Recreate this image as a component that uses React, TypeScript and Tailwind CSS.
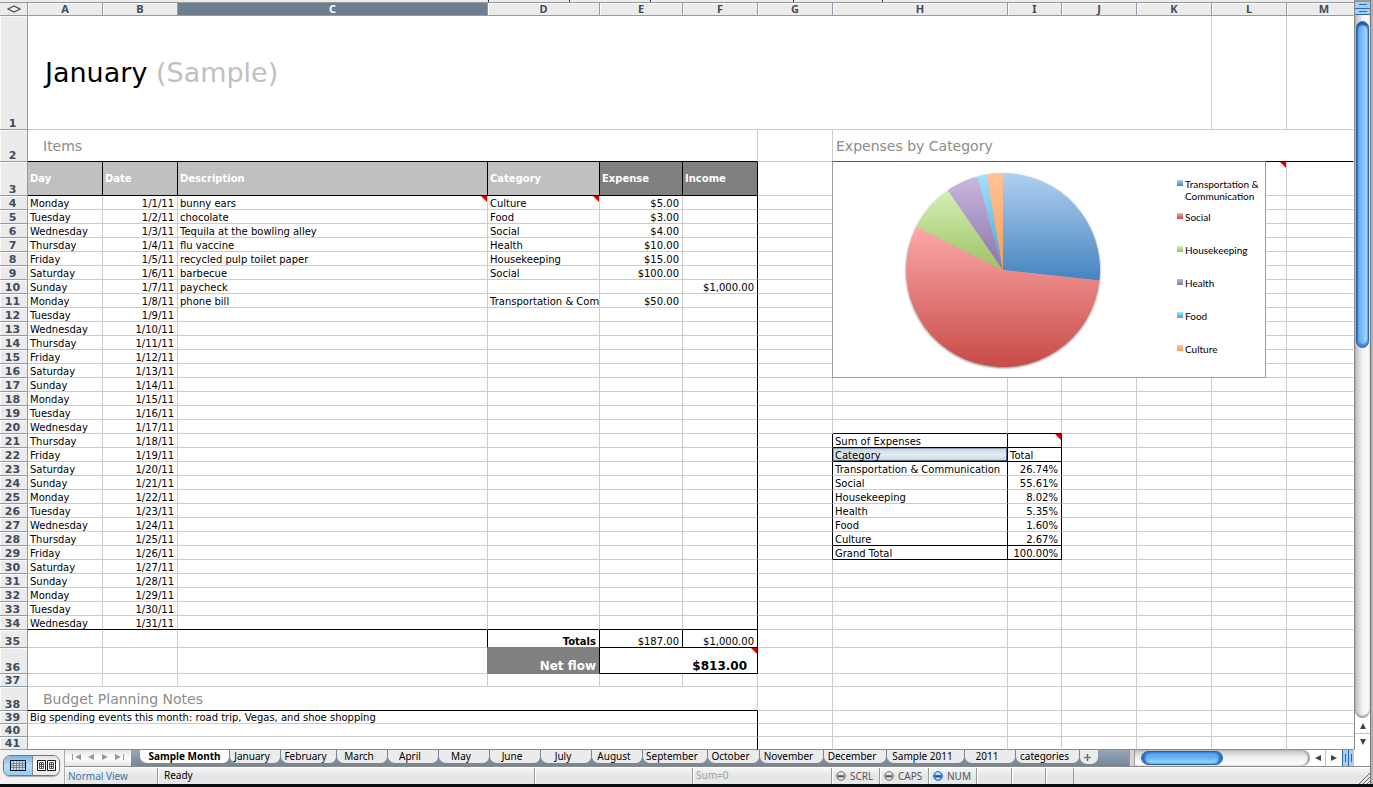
import { useState } from 'react';
import type { ReactNode } from 'react';
import clsx from 'clsx';

const COLUMNS = [
  { name: 'A', width: 'w-[75px]' },
  { name: 'B', width: 'w-[75px]' },
  { name: 'C', width: 'w-[310px]' },
  { name: 'D', width: 'w-[112px]' },
  { name: 'E', width: 'w-[83px]' },
  { name: 'F', width: 'w-[75px]' },
  { name: 'G', width: 'w-[75px]' },
  { name: 'H', width: 'w-[175px]' },
  { name: 'I', width: 'w-[54px]' },
  { name: 'J', width: 'w-[75px]' },
  { name: 'K', width: 'w-[75px]' },
  { name: 'L', width: 'w-[75px]' },
  { name: 'M', width: 'w-auto' },
];

const WEEKDAYS = ['Sunday', 'Monday', 'Tuesday', 'Wednesday', 'Thursday', 'Friday', 'Saturday'];

// the sample month starts on a Monday
const DAYS = Array.from({ length: 31 }, (_, i) => WEEKDAYS[(i + 1) % 7]);
const FIRST_ROW = 4;

interface Item {
  description: string;
  category?: string;
  expense?: string;
  income?: string;
}

const ITEMS: Item[] = [
  { description: 'bunny ears', category: 'Culture', expense: '$5.00' },
  { description: 'chocolate', category: 'Food', expense: '$3.00' },
  { description: 'Tequila at the bowling alley', category: 'Social', expense: '$4.00' },
  { description: 'flu vaccine', category: 'Health', expense: '$10.00' },
  { description: 'recycled pulp toilet paper', category: 'Housekeeping', expense: '$15.00' },
  { description: 'barbecue', category: 'Social', expense: '$100.00' },
  { description: 'paycheck', income: '$1,000.00' },
  { description: 'phone bill', category: 'Transportation & Com', expense: '$50.00' },
];

const PIVOT: Record<number, [string, string]> = {
  21: ['Sum of Expenses', ''],
  22: ['Category', 'Total'],
  23: ['Transportation & Communication', '26.74%'],
  24: ['Social', '55.61%'],
  25: ['Housekeeping', '8.02%'],
  26: ['Health', '5.35%'],
  27: ['Food', '1.60%'],
  28: ['Culture', '2.67%'],
  29: ['Grand Total', '100.00%'],
};

const SLICES = [
  { id: 'transport', label: 'Transportation & Communication', share: 26.74, from: '#b0d0ef', to: '#4484c0' },
  { id: 'social', label: 'Social', share: 55.61, from: '#fba9a9', to: '#c74b47' },
  { id: 'house', label: 'Housekeeping', share: 8.02, from: '#d6efb4', to: '#9dc265' },
  { id: 'health', label: 'Health', share: 5.35, from: '#c8b8de', to: '#8a72a9' },
  { id: 'food', label: 'Food', share: 1.6, from: '#a3e2fd', to: '#4a9ed6' },
  { id: 'culture', label: 'Culture', share: 2.67, from: '#ffc397', to: '#f89c55' },
];

const TABS = [
  { name: 'Sample Month', width: 'w-[90px]' },
  { name: 'January', width: 'w-[51px]' },
  { name: 'February', width: 'w-[56px]' },
  { name: 'March', width: 'w-[51px]' },
  { name: 'April', width: 'w-[51px]' },
  { name: 'May', width: 'w-[51px]' },
  { name: 'June', width: 'w-[51px]' },
  { name: 'July', width: 'w-[51px]' },
  { name: 'August', width: 'w-[51px]' },
  { name: 'September', width: 'w-[65px]' },
  { name: 'October', width: 'w-[52px]' },
  { name: 'November', width: 'w-[64px]' },
  { name: 'December', width: 'w-[63px]' },
  { name: 'Sample 2011', width: 'w-[78px]' },
  { name: '2011', width: 'w-[51px]' },
  { name: 'categories', width: 'w-[64px]' },
];

interface CellProps {
  children?: ReactNode;
  className?: string;
  span?: number;
  right?: string;
  bottom?: string;
  note?: boolean;
}

function Cell({ children, className, span, right = 'border-r-[#ccc]', bottom = 'border-b-[#ccc]', note }: CellProps) {
  return (
    <td
      colSpan={span}
      className={clsx('relative border-r border-b pr-[3px] pl-[2px] whitespace-nowrap', right, bottom, className ?? 'align-bottom')}
    >
      {children}
      {note && <span className="absolute top-0 right-0 size-[6px] bg-[#e00000] [clip-path:polygon(0_0,100%_0,100%_100%)]" />}
    </td>
  );
}

function Row({ index, height, children }: { index: number; height: string; children: ReactNode }) {
  return (
    <tr className={height}>
      <th
        scope="row"
        className="border-r border-b border-[#8e9dab] bg-[#ebebeb] pr-[2px] align-bottom text-[11px] font-bold text-[#414b5c] shadow-[inset_1px_1px_0_#fafafa]"
      >
        {index}
      </th>
      {children}
    </tr>
  );
}

function Blanks({ count }: { count: number }) {
  return Array.from({ length: count }, (_, i) => <Cell key={i} />);
}

const BLACK_R = 'border-r-black';
const BLACK_B = 'border-b-black';

function slicePath(start: number, end: number) {
  const point = (share: number) => {
    const angle = (share / 100) * Math.PI * 2;
    return `${171 + 97 * Math.sin(angle)} ${109 - 97 * Math.cos(angle)}`;
  };
  return `M171 109 L${point(start)} A97 97 0 ${end - start > 50 ? 1 : 0} 1 ${point(end)} Z`;
}

function ExpenseChart() {
  let total = 0;
  const slices = SLICES.map((slice) => {
    const start = total;
    total += slice.share;
    return { ...slice, path: slicePath(start, total) };
  });

  return (
    <figure className="absolute -top-px -left-px flex h-[217px] w-[434px] border border-[#9c9c9c] border-t-[#555] bg-white">
      <svg viewBox="1 1 344 215" className="h-[215px] w-[344px] shrink-0" role="img" aria-label="Expenses by Category">
        <defs>
          {slices.map((s) => (
            <linearGradient key={s.id} id={s.id} x1="0" y1="0" x2="0" y2="1">
              <stop offset="0" stopColor={s.from} />
              <stop offset="1" stopColor={s.to} />
            </linearGradient>
          ))}
          <filter id="pie-shadow" x="-10%" y="-10%" width="120%" height="120%">
            <feDropShadow dx="0" dy="1" stdDeviation="1.3" floodColor="#000" floodOpacity="0.5" />
          </filter>
        </defs>
        <g filter="url(#pie-shadow)">
          {slices.map((s) => (
            <path key={s.id} d={s.path} fill={`url(#${s.id})`} />
          ))}
        </g>
      </svg>
      <ul className="flex-1 pt-[16px] font-[Lato,sans-serif] text-[10px] leading-[12px]">
        {slices.map((s) => (
          <li key={s.id} className="flex h-[33px] items-start gap-[2px] whitespace-normal">
            <svg viewBox="0 0 6 6" className="mt-[2px] size-[6px] shrink-0" aria-hidden="true">
              <rect width="6" height="6" fill={`url(#${s.id})`} />
            </svg>
            <span className="w-[76px]">{s.label}</span>
          </li>
        ))}
      </ul>
    </figure>
  );
}

function ItemRow({ row }: { row: number }) {
  const i = row - FIRST_ROW;
  const item = ITEMS[i];
  const pivot = PIVOT[row];
  const bottom = row === 34 ? BLACK_B : undefined;
  const pivotBottom = [20, 21, 22, 28, 29].includes(row) ? BLACK_B : undefined;

  return (
    <Row index={row} height="h-[14px]">
      <Cell bottom={bottom}>{DAYS[i]}</Cell>
      <Cell bottom={bottom} className="text-right align-bottom">{`1/${i + 1}/11`}</Cell>
      <Cell bottom={bottom} note={row === 4}>{item?.description}</Cell>
      <Cell bottom={bottom} note={row === 4}>{item?.category}</Cell>
      <Cell bottom={bottom} className="text-right align-bottom">{item?.expense}</Cell>
      <Cell bottom={bottom} right={BLACK_R} className="text-right align-bottom">{item?.income}</Cell>
      <Cell right={pivot && BLACK_R} />
      <Cell
        right={pivot && BLACK_R}
        bottom={pivotBottom}
        className={clsx(
          'align-bottom',
          row === 22 && 'bg-linear-to-b from-[#c5d0dc] via-[#e6ebf1] to-[#cbd5df] shadow-[inset_1px_1px_0_#8fa3ba,inset_-1px_-1px_0_#51698a]',
        )}
      >
        {pivot?.[0]}
      </Cell>
      <Cell right={pivot && BLACK_R} bottom={pivotBottom} note={row === 21} className={clsx('align-bottom', row !== 22 && 'text-right')}>
        {pivot?.[1]}
      </Cell>
      <Blanks count={4} />
    </Row>
  );
}

function Sheet() {
  const lightHead = 'bg-[#c0c0c0] align-middle font-bold text-white';
  const darkHead = 'bg-[#808080] align-middle font-bold text-white';
  const section = 'align-middle text-[14px] text-[#8c8c8c]';

  return (
    <table className="w-full min-w-[1300px] table-fixed border-separate border-spacing-0 bg-white text-[10px] leading-[10px] text-black [&_td:last-child]:border-r-transparent">
      <colgroup>
        <col className="w-[28px]" />
        {COLUMNS.map((c) => (
          <col key={c.name} className={c.width} />
        ))}
      </colgroup>
      <thead>
        <tr className="h-[13px] bg-[#ebebeb] font-['Noto_Sans',sans-serif] text-[11px] leading-[12px] text-[#414b5c]">
          <th className="border-r border-b border-[#8e9dab]" aria-label="Select all">
            <svg viewBox="0 0 14 8" className="mx-auto h-[8px] w-[14px]" fill="none" stroke="#4a5464" strokeWidth="1.3">
              <path d="M1 4 L7 1 L13 4 L7 7 Z" />
            </svg>
          </th>
          {COLUMNS.map((c) => (
            <th
              key={c.name}
              scope="col"
              className={clsx(
                'border-r border-b border-[#8e9dab] font-bold',
                c.name === 'C' ? 'bg-[#6d7e8f] text-white' : 'shadow-[inset_1px_1px_0_#fafafa]',
                c.name === 'M' && 'border-r-transparent pl-2',
              )}
            >
              {c.name}
            </th>
          ))}
        </tr>
      </thead>
      <tbody>
        <Row index={1} height="h-[114px]">
          <Cell span={11} className="pl-[17px] align-middle text-[27px] leading-[32px]">
            <h1>
              January <span className="text-[#c0c0c0]">(Sample)</span>
            </h1>
          </Cell>
          <Blanks count={2} />
        </Row>
        <Row index={2} height="h-[32px]">
          <Cell span={6} bottom={BLACK_B} className={clsx(section, 'pl-[15px]')}>Items</Cell>
          <Cell />
          <Cell span={6} bottom={BLACK_B} className={clsx(section, 'pl-[3px]')}>Expenses by Category</Cell>
        </Row>
        <Row index={3} height="h-[34px]">
          <Cell right={BLACK_R} bottom={BLACK_B} className={lightHead}>Day</Cell>
          <Cell right={BLACK_R} bottom={BLACK_B} className={lightHead}>Date</Cell>
          <Cell right={BLACK_R} bottom={BLACK_B} className={lightHead}>Description</Cell>
          <Cell right={BLACK_R} bottom={BLACK_B} className={lightHead}>Category</Cell>
          <Cell right={BLACK_R} bottom={BLACK_B} className={darkHead}>Expense</Cell>
          <Cell right={BLACK_R} bottom={BLACK_B} className={darkHead}>Income</Cell>
          <Cell />
          <Cell className="z-10">
            <ExpenseChart />
          </Cell>
          <Blanks count={3} />
          <Cell note />
          <Cell />
        </Row>
        {DAYS.map((_, i) => (
          <ItemRow key={i} row={i + FIRST_ROW} />
        ))}
        <Row index={35} height="h-[18px]">
          <Blanks count={2} />
          <Cell right={BLACK_R} />
          <Cell right={BLACK_R} bottom="border-b-[#808080]" className="text-right align-bottom font-bold">Totals</Cell>
          <Cell right={BLACK_R} bottom={BLACK_B} className="text-right align-bottom">$187.00</Cell>
          <Cell right={BLACK_R} bottom={BLACK_B} className="text-right align-bottom">$1,000.00</Cell>
          <Blanks count={7} />
        </Row>
        <Row index={36} height="h-[26px]">
          <Blanks count={2} />
          <Cell right="border-r-[#808080]" />
          <Cell right={BLACK_R} bottom="border-b-[#808080]" className="bg-[#808080] pb-[2px] text-right align-bottom text-[12px] font-bold text-white">
            Net flow
          </Cell>
          <Cell span={2} right={BLACK_R} bottom={BLACK_B} note className="pr-[10px] pb-[2px] text-right align-bottom text-[12px] font-bold">
            $813.00
          </Cell>
          <Blanks count={7} />
        </Row>
        <Row index={37} height="h-[13px]">
          <Blanks count={13} />
        </Row>
        <Row index={38} height="h-[24px]">
          <Cell span={6} bottom={BLACK_B} className={clsx(section, 'pl-[15px]')}>Budget Planning Notes</Cell>
          <Blanks count={7} />
        </Row>
        <Row index={39} height="h-[13px]">
          <Cell span={6} right={BLACK_R}>Big spending events this month: road trip, Vegas, and shoe shopping</Cell>
          <Blanks count={7} />
        </Row>
        <Row index={40} height="h-[13px]">
          <Cell span={6} right={BLACK_R} />
          <Blanks count={7} />
        </Row>
        <Row index={41} height="h-[13px]">
          <Cell span={6} right={BLACK_R} bottom="border-b-[#8a8a8a]" />
          {Array.from({ length: 7 }, (_, i) => (
            <Cell key={i} bottom="border-b-[#8a8a8a]" />
          ))}
        </Row>
      </tbody>
    </table>
  );
}

const ARROWS = {
  up: 'M4 1 L7 7 L1 7 Z',
  down: 'M1 1 L7 1 L4 7 Z',
  left: 'M1 4 L7 1 L7 7 Z',
  right: 'M1 1 L7 4 L1 7 Z',
};

function Arrow({ dir, bar }: { dir: keyof typeof ARROWS; bar?: boolean }) {
  return (
    <svg viewBox={bar ? (dir === 'left' ? '-2 0 10 8' : '0 0 10 8') : '0 0 8 8'} className={clsx('h-[8px]', bar ? 'w-[10px]' : 'w-[8px]')} aria-hidden="true">
      <path d={ARROWS[dir]} fill="currentColor" />
      {bar && <rect x={dir === 'left' ? -2 : 9} y="1" width="1" height="6" fill="currentColor" />}
    </svg>
  );
}

function VerticalScroll() {
  return (
    <div className="flex w-[16px] shrink-0 flex-col border-l border-[#8a8a8a] bg-white">
      <div className="flex h-[15px] flex-col border-t-2 border-[#9a9a9a] bg-[#a5cdf3]">
        <div className="flex flex-1 items-center justify-center border-b border-[#2d6cb5]"><span className="h-px w-[8px] bg-[#2d6cb5]" /></div>
        <div className="flex flex-1 items-center justify-center border-b border-[#2d6cb5]"><span className="h-px w-[8px] bg-[#2d6cb5]" /></div>
      </div>
      <div className="flex-1 rounded-b-full bg-linear-to-r from-[#bdbdbd] via-[#f3f3f3] to-white pt-[6px] shadow-[inset_0_-2px_2px_#999]">
        <div className="mx-px h-[327px] rounded-full border border-[#2a62ad] bg-linear-to-r from-[#5aa5ee] via-[#80bcf6] to-[#aee8ff] shadow-[inset_0_3px_2px_#1b55a8,inset_0_-3px_2px_#3c86d8,inset_1px_0_0_#2f7bd4]" />
      </div>
      <button type="button" aria-label="Scroll up" className="flex h-[16px] items-center justify-center border-b border-[#c4c4c4] text-[#444]">
        <Arrow dir="up" />
      </button>
      <button type="button" aria-label="Scroll down" className="flex h-[16px] items-center justify-center text-[#444]">
        <Arrow dir="down" />
      </button>
    </div>
  );
}

function ViewToggle() {
  return (
    <div className="flex w-[65px] shrink-0 items-start border-r border-[#aaa] bg-[#f1f1f1] pt-[5px] pl-[3px]">
      <div className="flex h-[21px] w-[57px] overflow-hidden rounded-[7px] border border-[#777] shadow-[0_1px_1px_#aaa]">
        <button type="button" aria-label="Normal view" className="flex w-[29px] items-center justify-center border-r border-[#888] bg-linear-to-b from-[#7db4e4] via-[#b9dcf7] to-[#8fd0fb]">
          <svg viewBox="0 0 16 11" className="h-[11px] w-[16px]" aria-hidden="true">
            <rect x="0.5" y="0.5" width="15" height="10" fill="#c5ddef" stroke="#111" />
            <path d="M3.5 1V10M6.5 1V10M9.5 1V10M12.5 1V10M1 3.5H15M1 5.5H15M1 7.5H15" stroke="#56708a" strokeWidth="0.7" />
          </svg>
        </button>
        <button type="button" aria-label="Page layout view" className="flex flex-1 items-center justify-center bg-linear-to-b from-[#e2e2e2] via-white to-[#e8e8e8]">
          <svg viewBox="0 0 19 11" className="h-[11px] w-[19px]" aria-hidden="true">
            <path d="M0.5 0.5H8.5V10.5H0.5ZM10.5 0.5H18.5V10.5H10.5Z" fill="#fff" stroke="#111" />
            <path d="M2.5 2.5H6.5V8.5H2.5ZM4.5 2.5V8.5M2.5 4.5H6.5M2.5 6.5H6.5M12.5 2.5H16.5V8.5H12.5ZM14.5 2.5V8.5M12.5 4.5H16.5M12.5 6.5H16.5" fill="none" stroke="#333" strokeWidth="0.8" />
          </svg>
        </button>
      </div>
    </div>
  );
}

function SheetTabs() {
  const [active, setActive] = useState('Sample Month');

  return (
    <div className="flex h-[17px] border-b border-[#8a8a8a] bg-[#8d9dae]">
      <div className="flex w-[66px] shrink-0 items-center justify-around bg-linear-to-b from-[#e4e4e4] via-white to-[#e4e4e4] px-[4px] pb-[3px] text-[#9a9a9a]">
        <button type="button" aria-label="First sheet"><Arrow dir="left" bar /></button>
        <button type="button" aria-label="Previous sheet"><Arrow dir="left" /></button>
        <button type="button" aria-label="Next sheet"><Arrow dir="right" /></button>
        <button type="button" aria-label="Last sheet"><Arrow dir="right" bar /></button>
      </div>
      <div className="flex min-w-0 flex-1 overflow-hidden bg-linear-to-b from-[#98a8b8] to-[#74859a] pl-[9px]">
        {TABS.map((tab) => (
          <button
            key={tab.name}
            type="button"
            onClick={() => setActive(tab.name)}
            className={clsx(
              'h-[14px] shrink-0 rounded-b-[7px] border-r border-b border-[#7b8795] text-center text-[10px] leading-[13px] whitespace-nowrap text-black',
              tab.width,
              tab.name === active ? 'bg-white font-bold' : 'bg-[#ebebeb] pr-[6px]',
            )}
          >
            {tab.name}
          </button>
        ))}
        <button type="button" aria-label="Insert sheet" className="flex h-[14px] w-[18px] shrink-0 items-center justify-center rounded-b-[7px] bg-[#ebebeb] pr-[4px]">
          <svg viewBox="0 0 7 7" className="size-[7px]" aria-hidden="true">
            <path d="M3.5 0V7" stroke="#3d68b0" strokeWidth="1.5" />
            <path d="M0 3.5H7" stroke="#b0702f" strokeWidth="1.5" />
          </svg>
        </button>
      </div>
      <div className="w-[6px] shrink-0 border-x border-[#999] bg-[#d5d5d5]" />
      <div className="flex w-[219px] shrink-0 bg-white">
        <div className="flex flex-1 items-center rounded-r-full bg-linear-to-b from-[#c4c4c4] via-[#f3f3f3] to-white pl-[6px] shadow-[inset_-2px_0_2px_#999]">
          <div className="h-[14px] w-[82px] rounded-full border border-[#2a62ad] bg-linear-to-b from-[#4d9ff0] via-[#68b3f5] to-[#a8e6ff] shadow-[inset_3px_0_2px_#2a6cc0,inset_-3px_0_2px_#2a6cc0]" />
        </div>
        <button type="button" aria-label="Scroll left" className="flex w-[16px] items-center justify-center border-r border-[#c4c4c4] text-[#444]"><Arrow dir="left" /></button>
        <button type="button" aria-label="Scroll right" className="flex w-[16px] items-center justify-center text-[#444]"><Arrow dir="right" /></button>
        <div className="flex w-[12px] border-l border-[#2d6cb5] bg-[#a5cdf3]">
          <div className="flex flex-1 items-center justify-center border-r border-[#2d6cb5]"><span className="h-[8px] w-px bg-[#2d6cb5]" /></div>
          <div className="flex flex-1 items-center justify-center"><span className="h-[8px] w-px bg-[#2d6cb5]" /></div>
        </div>
      </div>
      <div className="w-[16px] shrink-0 bg-white" />
    </div>
  );
}

function KeyLight({ label, on, width }: { label: string; on?: boolean; width: string }) {
  return (
    <div className={clsx('flex shrink-0 items-center gap-[4px] border-r border-[#999] pl-[4px] text-[#555] shadow-[inset_1px_0_0_#fff]', width)}>
      <svg viewBox="0 0 10 10" className="size-[10px]" aria-hidden="true">
        <circle cx="5" cy="5" r="4.4" fill={on ? '#3f9af0' : '#b0b0b0'} stroke={on ? '#2a6cba' : '#808080'} strokeWidth="1" />
        <ellipse cx="5" cy="2.8" rx="2.8" ry="1.5" fill="#fff" opacity="0.7" />
        <rect x="2" y="4.4" width="6" height="1.6" fill={on ? '#17509c' : '#555'} />
        <ellipse cx="5" cy="7.6" rx="2.2" ry="1.1" fill="#fff" opacity="0.6" />
      </svg>
      {label}
    </div>
  );
}

function StatusBar() {
  const cell = 'shrink-0 border-r border-[#999] shadow-[inset_1px_0_0_#fff]';

  return (
    <div className="flex h-[17px] border-t border-white bg-linear-to-b from-[#f6f6f6] via-[#e3e5e6] to-[#e6e8e9] text-[10px] leading-[15px] whitespace-nowrap text-black">
      <div className={clsx(cell, 'w-[93px] pt-px pl-[3px] text-[#3f76ab]')}>Normal View</div>
      <div className={clsx(cell, 'w-[377px] pl-[6px]')}>Ready</div>
      <div className={clsx(cell, 'w-[158px]')} />
      <div className={clsx(cell, 'w-[139px] pl-[3px] text-[#a3a3a3]')}>Sum=0</div>
      <KeyLight label="SCRL" width="w-[48px]" />
      <KeyLight label="CAPS" width="w-[49px]" />
      <KeyLight label="NUM" width="w-[48px]" on />
      <div className={clsx(cell, 'w-[35px]')} />
      <div className={clsx(cell, 'w-[34px]')} />
      <div className={clsx(cell, 'w-[28px]')} />
      <div className="flex flex-1 items-end justify-end">
        <svg viewBox="0 0 12 12" className="size-[12px]" stroke="#666" strokeWidth="1" aria-hidden="true">
          <path d="M1 12L12 1M5 12L12 5M9 12L12 9" />
        </svg>
      </div>
    </div>
  );
}

export default function App() {
  return (
    <div className="min-h-screen overflow-hidden bg-[#0b0e12] font-['DejaVu_Sans',Verdana,sans-serif]">
      <div className="flex">
        <div className="min-w-0 flex-1">
          <div className="flex">
            <main className="min-w-0 flex-1 overflow-hidden">
              <div className="flex h-[3px] border-b border-[#999] bg-[#ebebeb]">
                <div className="w-[489px] border-r border-[#333]" />
                <div className="w-[81px] border-r border-[#333]" />
                <div className="w-[81px] border-r border-[#333]" />
                <div className="w-[143px] border-r border-[#333]" />
                <div className="w-[89px] border-r border-[#333]" />
              </div>
              <Sheet />
            </main>
            <VerticalScroll />
          </div>
          <footer className="flex font-['Noto_Sans',sans-serif]">
            <ViewToggle />
            <div className="min-w-0 flex-1">
              <SheetTabs />
              <StatusBar />
            </div>
          </footer>
        </div>
        <div className="w-[3px] shrink-0 border-l border-[#777] bg-[#b3b3b3]" />
      </div>
    </div>
  );
}
